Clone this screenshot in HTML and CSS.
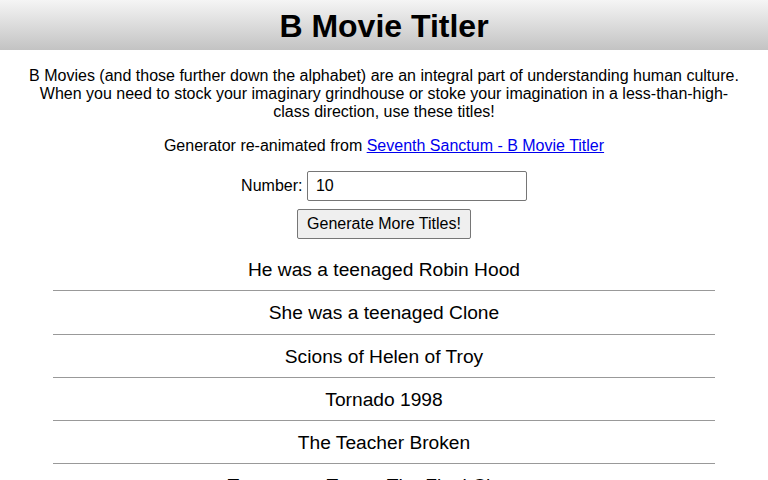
FILE: index.html
```html
<!DOCTYPE html>
<html lang="en">
<head>
  <meta charset="UTF-8">
  <title>B Movie Titler</title>
  <link rel="stylesheet" href="styles.css">
</head>
<body>
  <div class="header">
    <h1>B Movie Titler</h1>
  </div>

  <div class="container">
    <p class="intro">B Movies (and those further down the alphabet) are an integral part of understanding human culture. When you need to stock your imaginary grindhouse or stoke your imagination in a less-than-high-class direction, use these titles!</p>

    <p class="credit">Generator re-animated from <a href="#">Seventh Sanctum - B Movie Titler</a></p>

    <form id="formTitler">
      <label>Number: <input type="number" id="numero" value="10" min="1"></label>
      <button type="submit">Generate More Titles!</button>
    </form>

    <ul class="titulos">
      <li>He was a teenaged Robin Hood</li>
      <li>She was a teenaged Clone</li>
      <li>Scions of Helen of Troy</li>
      <li>Tornado 1998</li>
      <li>The Teacher Broken</li>
      <li>Tomorrows Terror: The Final Chapter</li>
      <li>Attack of the Giant Robot</li>
      <li>Return of the Mummy</li>
      <li>Night of the Librarian</li>
      <li>Curse of the Zombie Lawyer</li>
    </ul>
  </div>
</body>
</html>
```

FILE: styles.css
```css
body {
  font-family: "Liberation Sans", Arial, sans-serif;
  margin: 0;
  padding: 0;
  color: #000;
  background: #fff;
}
.header {
  height: 50px;
  background: linear-gradient(#f5f5f5, #c3c3c3);
  text-align: center;
}
.header h1 {
  margin: 0;
  font-size: 32px;
  line-height: 52px;
}
.container {
  padding: 0 25px;
  text-align: center;
}
.intro {
  margin: 17px 0 0;
  line-height: 18px;
}
.credit {
  margin: 16px 0 0;
}
.credit a {
  color: #0000ee;
}
form {
  margin-top: 16px;
  display: flex;
  flex-direction: column;
  align-items: center;
  gap: 8px;
}
input[type="number"] {
  width: 220px;
  height: 30px;
  box-sizing: border-box;
  padding: 2px 8px;
  font-family: inherit;
  font-size: 16px;
  border: 1px solid #767676;
  border-radius: 2px;
  -moz-appearance: textfield;
}
input::-webkit-inner-spin-button,
input::-webkit-outer-spin-button {
  -webkit-appearance: none;
}
button {
  height: 30px;
  padding: 0 9px;
  font-family: inherit;
  font-size: 16px;
  background: #efefef;
  border: 1px solid #767676;
  border-radius: 2px;
  color: #000;
}
.titulos {
  list-style: none;
  margin: 9px auto 0;
  padding: 0;
  width: 662px;
}
.titulos li {
  font-size: 19.2px;
  line-height: 22.3px;
  padding: 11px 0 9px;
  border-bottom: 1px solid #999;
}
```
